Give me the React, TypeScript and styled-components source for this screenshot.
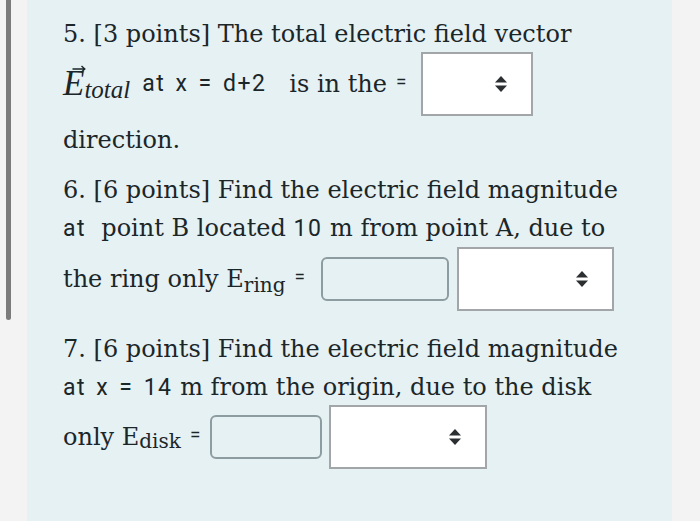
import styled, { createGlobalStyle } from "styled-components";

const GlobalStyle = createGlobalStyle`
  html, body {
    margin: 0;
    padding: 0;
    background: #f3f3f3;
  }
`;

const Page = styled.div`
  display: flex;
  width: 700px;
  height: 521px;
  overflow: hidden;
  background: #f3f3f3;
`;

const Gutter = styled.div`
  width: 27px;
  flex-shrink: 0;
  padding-left: 6px;
  box-sizing: border-box;
`;

const ScrollThumb = styled.div`
  width: 5px;
  height: 320px;
  background: #7b7b7b;
  border-radius: 0 0 3px 3px;
`;

const Panel = styled.div`
  width: 645px;
  flex-shrink: 0;
  background: #e6f1f4;
  padding: 15px 0 0 36px;
  box-sizing: border-box;
  color: #1b2629;
  font-family: "DejaVu Serif", serif;
  font-size: 24px;
`;

const Question = styled.div<{ $top: number }>`
  margin-top: ${(p) => p.$top}px;
`;

const Line = styled.div<{ $top?: number }>`
  height: 38px;
  line-height: 38px;
  white-space: nowrap;
  margin-top: ${(p) => p.$top ?? 0}px;
`;

const Row = styled.div<{ $top?: number }>`
  display: flex;
  align-items: center;
  height: 64px;
  white-space: nowrap;
  line-height: 38px;
  margin-top: ${(p) => p.$top ?? 0}px;
`;

const Sans = styled.span`
  font-family: Roboto, "Liberation Sans", sans-serif;
  font-size: 23px;
  letter-spacing: 1.5px;
  word-spacing: 3px;
`;

const Eq = styled.span<{ $ml: number }>`
  font-family: Roboto, "Liberation Sans", sans-serif;
  font-size: 19px;
  position: relative;
  top: -2px;
  margin-left: ${(p) => p.$ml}px;
`;

const Vec = styled.span`
  position: relative;
  display: inline-block;
  font-family: "Liberation Serif", serif;
  font-style: italic;
  font-size: 35px;
`;

const VecArrow = styled.svg`
  position: absolute;
  left: 9px;
  top: 0px;
`;

const MathSub = styled.span`
  font-family: "Liberation Serif", serif;
  font-style: italic;
  font-size: 25px;
  position: relative;
  top: 6px;
  margin-right: 12px;
`;

const Sub = styled.span<{ $drop: number }>`
  font-size: 20px;
  position: relative;
  top: ${(p) => p.$drop}px;
`;

const TextBox = styled.div<{ $w: number; $ml: number }>`
  width: ${(p) => p.$w}px;
  height: 44px;
  box-sizing: border-box;
  border: 2px solid #8d9ca1;
  border-radius: 6px;
  margin-left: ${(p) => p.$ml}px;
  flex-shrink: 0;
`;

const Select = styled.div<{ $w: number; $ml: number }>`
  width: ${(p) => p.$w}px;
  height: 64px;
  box-sizing: border-box;
  border: 2px solid #a3a6a8;
  background: #ffffff;
  margin-left: ${(p) => p.$ml}px;
  flex-shrink: 0;
  display: flex;
  align-items: center;
  justify-content: flex-end;
  padding-right: 23px;
`;

function Arrows() {
  return (
    <svg width="14" height="18" viewBox="0 0 14 18">
      <path d="M7 1 L13 7.5 H1 Z" fill="#2c2f31" />
      <path d="M7 17 L13 10.5 H1 Z" fill="#2c2f31" />
    </svg>
  );
}

export default function App() {
  return (
    <>
      <GlobalStyle />
      <Page>
        <Gutter>
          <ScrollThumb />
        </Gutter>
        <Panel>
          <Question $top={0}>
            <Line>5. [3 points] The total electric field vector</Line>
            <Row $top={-1}>
              <Vec>
                E
                <VecArrow width="14" height="8" viewBox="0 0 14 8">
                  <path d="M0.5 4 H12.5 M9.5 1 L12.8 4 L9.5 7" stroke="#1b2629" strokeWidth="1.4" fill="none" />
                </VecArrow>
              </Vec>
              <MathSub>total</MathSub>
              <Sans>at x = d+2</Sans>
              &nbsp;&nbsp;&nbsp;is in the<Eq $ml={9}>=</Eq>
              <Select $w={112} $ml={15}>
                <Arrows />
              </Select>
            </Row>
            <Line $top={5}>direction.</Line>
          </Question>

          <Question $top={12}>
            <Line>6. [6 points] Find the electric field magnitude</Line>
            <Line>
              <Sans>at</Sans>&nbsp; point B located <Sans>10</Sans> m from point A, due to
            </Line>
            <Row>
              the ring only E<Sub $drop={6}>ring</Sub>
              <Eq $ml={9}>=</Eq>
              <TextBox $w={128} $ml={16} />
              <Select $w={157} $ml={8}>
                <Arrows />
              </Select>
            </Row>
          </Question>

          <Question $top={19}>
            <Line>7. [6 points] Find the electric field magnitude</Line>
            <Line>
              <Sans>at x = 14</Sans> m from the origin, due to the disk
            </Line>
            <Row $top={-1}>
              only E<Sub $drop={4}>disk</Sub>
              <Eq $ml={9}>=</Eq>
              <TextBox $w={112} $ml={10} />
              <Select $w={158} $ml={7}>
                <Arrows />
              </Select>
            </Row>
          </Question>
        </Panel>
      </Page>
    </>
  );
}
